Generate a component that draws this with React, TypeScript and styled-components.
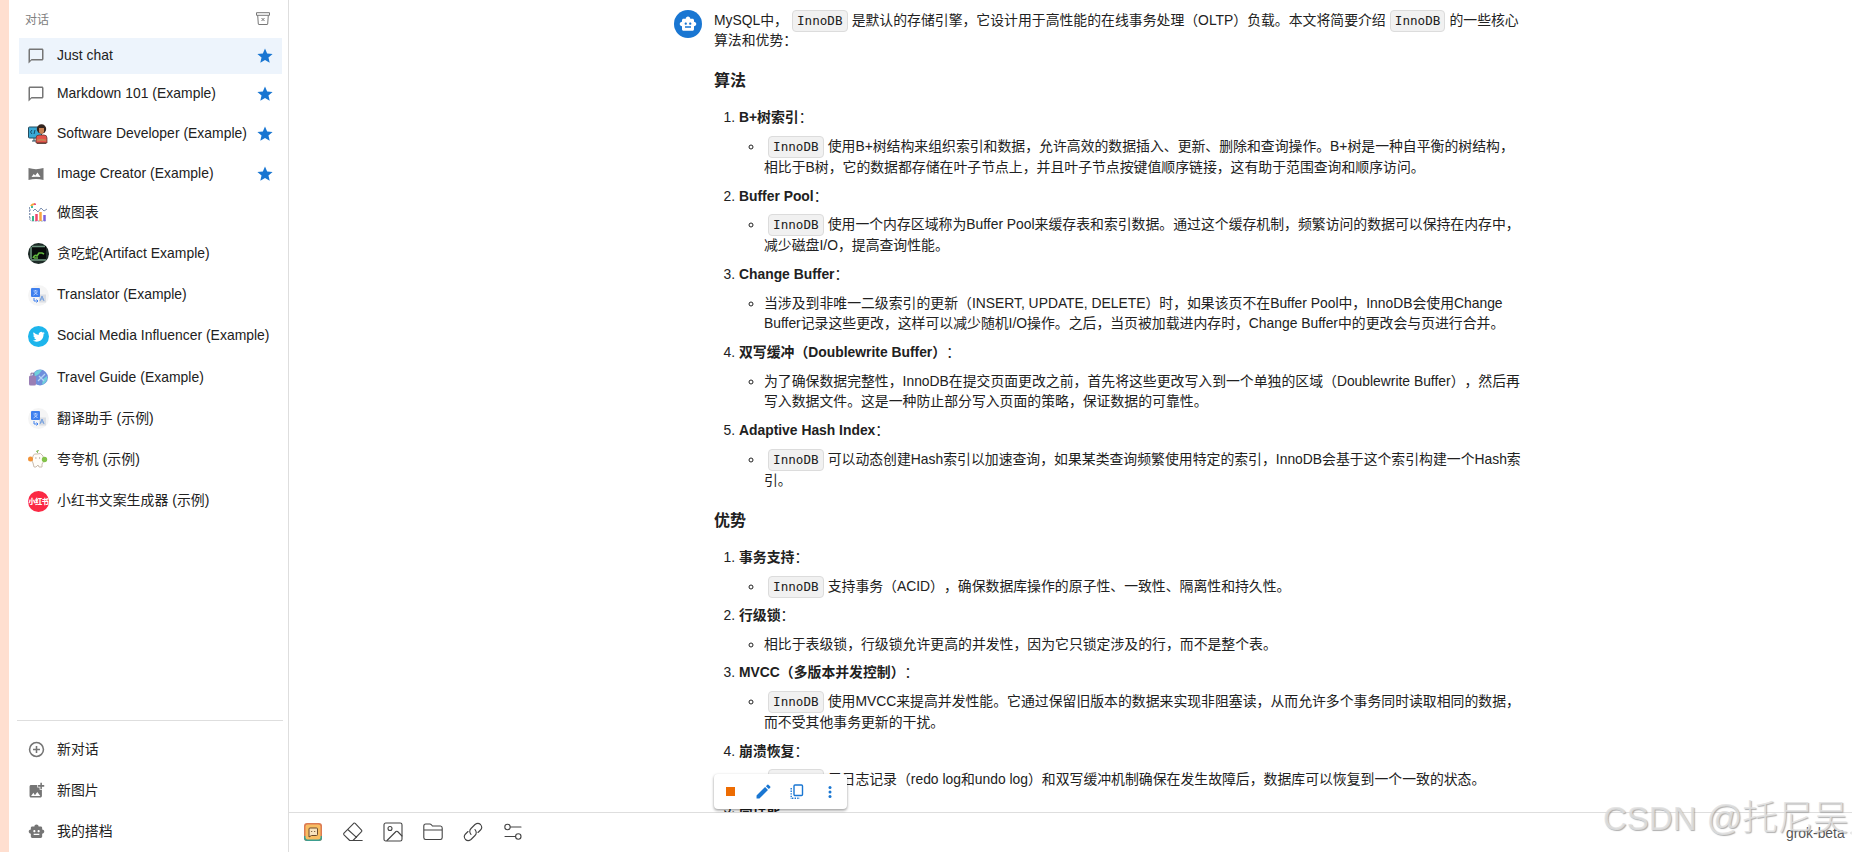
import React from "react";
import styled, { createGlobalStyle } from "styled-components";

const latin = '"Liberation Sans", "Noto Sans CJK SC", sans-serif';

const GlobalStyle = createGlobalStyle`
  * { box-sizing: border-box; }
  body { margin: 0; overflow: hidden; background: #fff; color: #212121; font-family: ${latin}; text-spacing-trim: space-all; }
`;

const Shell = styled.div`
  position: relative;
  display: flex;
  width: 1852px;
  height: 852px;
  overflow: hidden;
`;
const Strip = styled.div`
  width: 9px;
  background: #ffdfd0;
`;
const Sidebar = styled.aside`
  display: flex;
  flex-direction: column;
  width: 280px;
  padding: 0 5px 0 8px;
  border-right: 1px solid #dedede;
`;
const SideHead = styled.div`
  display: flex;
  justify-content: space-between;
  align-items: center;
  height: 38px;
  padding: 0 13px 1px 8px;
  font-size: 12px;
  color: #808080;
`;
const Session = styled.div<{ $h: number; $active?: boolean }>`
  display: flex;
  align-items: center;
  height: ${(p) => p.$h}px;
  margin: 0 1px 0 2px;
  padding: 0 9px 0 9px;
  background: ${(p) => (p.$active ? "#edf4fc" : "transparent")};
`;
const IconSlot = styled.span<{ $nudge?: boolean }>`
  display: flex;
  width: 29px;
  flex: none;
  color: #757575;
  svg { margin-left: ${(p) => (p.$nudge ? "-1px" : "0")}; }
`;
const Title = styled.span`
  flex: 1;
  font-size: 13.9px;
  letter-spacing: 0.03px;
  line-height: 20px;
  white-space: nowrap;
  margin-top: -2px;
`;
const SideFoot = styled.div`
  margin-top: auto;
  padding-top: 8px;
  border-top: 1px solid #dedede;
`;
const FootRow = styled.div`
  display: flex;
  align-items: center;
  height: 41px;
  padding-left: 11px;
`;
const Main = styled.main`
  display: flex;
  flex-direction: column;
  flex: 1;
  min-width: 0;
`;
const Chat = styled.section`
  display: flex;
  height: 812px;
  overflow: hidden;
  padding: 10px 0 0 385px;
`;
const Avatar = styled.div`
  display: flex;
  align-items: center;
  justify-content: center;
  flex: none;
  width: 28px;
  height: 28px;
  border-radius: 50%;
  background: #1976d2;
  margin-right: 12px;
`;
const Message = styled.article`
  width: 830px;
  font-size: 13.87px;
  line-height: 20.6px;
  white-space: nowrap;
`;
const Line = styled.div`
  height: 20.3px;
`;
const Heading = styled.h3`
  margin: 18.2px 0 14.6px;
  font-size: 16px;
  line-height: 24px;
  font-weight: 700;
`;
const Code = styled.code`
  display: inline-block;
  height: 22px;
  margin: -1px 4px;
  padding: 0 4.1px;
  border: 1px solid #dcdcdc;
  border-radius: 4px;
  background: #f1f1f1;
  font-family: "DejaVu Sans Mono", monospace;
  font-size: 12.6px;
  line-height: 20px;
`;
const Numbered = styled.ol`
  margin: 0;
  padding-left: 25px;
  & > li { margin-bottom: 8.1px; }
`;
const Bullets = styled.ul`
  list-style: circle;
  margin: 8.1px 0 0;
  padding-left: 25px;
`;
const InputBar = styled.footer`
  display: flex;
  align-items: flex-start;
  justify-content: space-between;
  height: 40px;
  padding: 9px 0 0 14px;
  border-top: 1px solid #dedede;
  color: #444;
`;
const Tools = styled.div`
  display: flex;
  gap: 20px;
`;
const Model = styled.div`
  display: flex;
  align-items: center;
  gap: 5px;
  width: 66px;
  height: 22px;
  overflow: hidden;
  font-size: 13.9px;
  white-space: nowrap;
  color: #555;
`;
const ActionMenu = styled.div`
  position: absolute;
  left: 714px;
  top: 774px;
  display: grid;
  grid-template-columns: repeat(4, 33px);
  place-items: center;
  width: 133px;
  height: 35px;
  border-radius: 4px;
  background: #fff;
  color: #1976d2;
  box-shadow: 0 1px 3px rgba(0, 0, 0, 0.28), 0 2px 3px rgba(0, 0, 0, 0.16);
`;
const StopMark = styled.span`
  width: 9px;
  height: 9px;
  background: #ed6c02;
`;
const Watermark = styled.div`
  position: absolute;
  left: 1603px;
  top: 796px;
  display: flex;
  align-items: baseline;
  gap: 10px;
  font-size: 33px;
  line-height: 44px;
  white-space: nowrap;
  color: rgba(225, 225, 225, 0.85);
  text-shadow: 1px 1px 1px rgba(130, 130, 130, 0.65);
`;
const Name = styled.span`
  font-size: 35.5px;
  font-weight: 300;
  letter-spacing: -0.2px;
`;

const Robot = ({ s, c }: { s: number; c: string }) => (
  <svg width={s} height={s} viewBox="0 0 24 24" fill={c}>
    <path d="M20 9V7c0-1.100-.9-2-2-2h-3c0-1.660-1.340-3-3-3S9 3.340 9 5H6c-1.100 0-2 .9-2 2v2c-1.660 0-3 1.340-3 3s1.340 3 3 3v4c0 1.100.9 2 2 2h12c1.100 0 2-.9 2-2v-4c1.660 0 3-1.340 3-3s-1.340-3-3-3M7.500 11.500c0-.83.67-1.500 1.500-1.500s1.500.67 1.500 1.500S9.830 13 9 13s-1.500-.67-1.500-1.500M16 17H8v-2h8zm-1-4c-.83 0-1.500-.67-1.500-1.500S14.170 10 15 10s1.500.67 1.500 1.500S15.830 13 15 13" />
  </svg>
);
const Bubble = () => (
  <svg width="18" height="18" viewBox="0 0 24 24" fill="currentColor">
    <path d="M20 2H4c-1.100 0-2 .9-2 2v18l4-4h14c1.100 0 2-.9 2-2V4c0-1.100-.9-2-2-2m0 14H6l-2 2V4h16z" />
  </svg>
);
const Star = () => (
  <svg width="16" height="16" viewBox="1.500 1.500 21 21" fill="#1976d2">
    <path d="M12 17.270 18.180 21l-1.640-7.030L22 9.240l-7.190-.61L12 2 9.190 8.630 2 9.240l5.460 4.730L5.820 21z" />
  </svg>
);
const Archive = () => (
  <svg width="14" height="13" viewBox="0 0 14 13" fill="none" stroke="#777">
    <path d="M.5.700h13v2.600H.5zM1.700 3.300 2.300 12q0 .5.600.5h8.200q.6 0 .6-.5l.6-8.700" />
    <path d="m5.500 6 3 3m0-3-3 3" />
  </svg>
);
const Panorama = () => (
  <svg width="18" height="18" viewBox="0 0 24 24" fill="#757575">
    <path fillRule="evenodd" d="M2 4q10 3 20 0v16q-10-3-20 0zM6 16q6-1 12 0l-4-6-3 4-2-2z" />
  </svg>
);
const Developer = () => (
  <svg width="20" height="20" viewBox="0 0 20 20">
    <rect x=".5" y="3" width="13" height="11" rx="1" fill="#39a9d6" stroke="#254b5d" />
    <path d="M4 17h5M6 14v3" stroke="#254b5d" />
    <path d="m4 6-1.500 2L4 10m3-4-1 4" stroke="#154a64" fill="none" />
    <circle cx="13.500" cy="5" r="4.700" fill="#34251f" />
    <path d="M11 4h5v4q-2.500 4-5 0z" fill="#c98253" />
    <path d="M8 19v-5q0-3 3-3h5q3 0 3 3v5z" fill="#e4534a" stroke="#55302d" strokeWidth=".7" />
    <path d="M9 16.500q4-1.500 9 0" stroke="#c98253" strokeWidth="1.800" fill="none" />
    <path d="M9 19.300h9" stroke="#4b3029" />
  </svg>
);
const Chart = () => (
  <svg width="20" height="20" viewBox="0 0 20 20" fill="none">
    <path d="M1.500 4v11q0 3 3 3h13M1 7h2m-2 4h2m-2 4h2" stroke="#8b9bb8" strokeDasharray="2 1" />
    <path d="m5 8 2-2 3 3 3-4 3 3 3-2" stroke="#7b8fb0" />
    <path d="M3 3q1-2 4-2" stroke="#f3a33a" strokeWidth="2" />
    <path d="M3 4h2" stroke="#43bd9b" strokeWidth="2" />
    <path d="M6 1.200h2" stroke="#e94a83" strokeWidth="1.600" />
    <path d="M5 13v5" stroke="#36b58d" strokeWidth="2" />
    <path d="M8.500 11v7" stroke="#ef4770" strokeWidth="2.500" />
    <path d="M12.500 9v9" stroke="#f6a340" strokeWidth="2.500" />
    <path d="M16.500 12v6" stroke="#7b62dd" strokeWidth="2.500" />
  </svg>
);
const Snake = () => (
  <svg width="21" height="21" viewBox="0 0 21 21">
    <circle cx="10.500" cy="10.500" r="10.500" fill="#1d2b27" />
    <path d="M4 3h14v13H4z" fill="#070b0b" />
    <path d="M3 4v12m0 1h15M4 3.500h13" stroke="#6d957e" strokeWidth="1.500" />
    <path d="M5 15q2-4 4-2l2-3h3l2 1" stroke="#61b53e" fill="none" strokeWidth="1.600" />
    <path d="M6 15h4" stroke="#61b53e" strokeWidth="1.500" />
  </svg>
);
const Translate = () => (
  <svg width="21" height="21" viewBox="0 0 21 21" fill="none">
    <circle cx="10.500" cy="10.500" r="10.500" fill="#f5f5f5" />
    <rect x="11" y="9.500" width="7" height="8" fill="#dadde3" />
    <rect x="3" y="3" width="9" height="9" rx="1" fill="#3f80ee" />
    <path d="M5.500 6h4m-2-1v1m-2 4 4-3m-3 0 3 3" stroke="#b9d3ff" />
    <path d="M6 13v3h4m-1.500-1.500L10 16l-1.500 1.500" stroke="#3f80ee" />
    <path d="m12 16 2-5 2 5m-3.500-2h3" stroke="#74a0df" />
  </svg>
);
const Bird = () => (
  <svg width="21" height="21" viewBox="0 0 42 42">
    <circle cx="21" cy="21" r="21" fill="#1db5ec" />
    <g transform="translate(9.500 9.500)" fill="#fff">
      <path d="M23.950 4.570a10 10 0 0 1-2.820.77 4.960 4.960 0 0 0 2.160-2.720 9.900 9.900 0 0 1-3.120 1.190 4.920 4.920 0 0 0-8.380 4.480A14 14 0 0 1 1.640 3.160a4.920 4.920 0 0 0 1.520 6.570 4.900 4.900 0 0 1-2.230-.61v.06a4.920 4.920 0 0 0 3.950 4.830 5 5 0 0 1-2.210.08 4.940 4.940 0 0 0 4.600 3.420A9.870 9.870 0 0 1 0 19.540a14 14 0 0 0 7.550 2.210c9.050 0 14-7.500 14-13.980q0-.32-.02-.64a10 10 0 0 0 2.420-2.560" />
    </g>
  </svg>
);
const Travel = () => (
  <svg width="20" height="18" viewBox="0 0 20 18" fill="none">
    <circle cx="12" cy="8.500" r="7.900" fill="#6f8fdc" />
    <path d="M6 4q4-4 8-3l-3 4-5 3zM15 10l4-3q1 6-5 9z" fill="#6fd0dc" />
    <path d="m10 12 7-7m-6 2 5 5" stroke="#b5d5f5" strokeWidth="1.300" />
    <rect x="1" y="6.500" width="7" height="10" rx="1.500" fill="#9a7fb5" />
    <path d="M3 6.500V4.200h3v2.300" stroke="#806c9b" />
  </svg>
);
const Praise = () => (
  <svg width="20" height="20" viewBox="0 0 20 20" fill="none">
    <path d="M5 6q1-3 4-2 4-2 6 2l1 5-2 3v3h-3l-1-2-2 2H6l-1-4-1-2z" fill="#fffdf8" stroke="#c9bcae" />
    <circle cx="2.500" cy="9" r="2.500" fill="#f29236" />
    <circle cx="16.500" cy="9.500" r="2.700" fill="#83c24a" />
    <path d="M9.500 3V.5M8 1.500l3-1" stroke="#8cbf68" />
    <path d="M7.500 8h.8m3 0h.8" stroke="#695b50" />
  </svg>
);
const RedSeal = styled.span`
  display: flex;
  align-items: center;
  justify-content: center;
  width: 21px;
  height: 21px;
  border-radius: 50%;
  overflow: hidden;
  background: #fb2944;
  color: #fff;
  font-size: 7px;
  font-weight: 900;
  letter-spacing: -0.3px;
  white-space: nowrap;
`;

const sessions: { t: string; h: number; icon: React.ReactNode; star?: boolean; nudge?: boolean }[] = [
  { t: "Just chat", h: 36, icon: <Bubble />, star: true, nudge: true },
  { t: "Markdown 101 (Example)", h: 39, icon: <Bubble />, star: true, nudge: true },
  { t: "Software Developer (Example)", h: 41, icon: <Developer />, star: true },
  { t: "Image Creator (Example)", h: 39, icon: <Panorama />, star: true, nudge: true },
  { t: "做图表", h: 39, icon: <Chart /> },
  { t: "贪吃蛇(Artifact Example)", h: 43, icon: <Snake /> },
  { t: "Translator (Example)", h: 40, icon: <Translate /> },
  { t: "Social Media Influencer (Example)", h: 42, icon: <Bird /> },
  { t: "Travel Guide (Example)", h: 41, icon: <Travel /> },
  { t: "翻译助手 (示例)", h: 41, icon: <Translate /> },
  { t: "夸夸机 (示例)", h: 42, icon: <Praise /> },
  { t: "小红书文案生成器 (示例)", h: 40, icon: <RedSeal>小红书</RedSeal> },
];

type Point = { t: string; code?: boolean; lines: string[] };
const algorithms: Point[] = [
  { t: "B+树索引", code: true, lines: ["使用B+树结构来组织索引和数据，允许高效的数据插入、更新、删除和查询操作。B+树是一种自平衡的树结构，", "相比于B树，它的数据都存储在叶子节点上，并且叶子节点按键值顺序链接，这有助于范围查询和顺序访问。"] },
  { t: "Buffer Pool", code: true, lines: ["使用一个内存区域称为Buffer Pool来缓存表和索引数据。通过这个缓存机制，频繁访问的数据可以保持在内存中，", "减少磁盘I/O，提高查询性能。"] },
  { t: "Change Buffer", lines: ["当涉及到非唯一二级索引的更新（INSERT, UPDATE, DELETE）时，如果该页不在Buffer Pool中，InnoDB会使用Change", "Buffer记录这些更改，这样可以减少随机I/O操作。之后，当页被加载进内存时，Change Buffer中的更改会与页进行合并。"] },
  { t: "双写缓冲（Doublewrite Buffer）", lines: ["为了确保数据完整性，InnoDB在提交页面更改之前，首先将这些更改写入到一个单独的区域（Doublewrite Buffer），然后再", "写入数据文件。这是一种防止部分写入页面的策略，保证数据的可靠性。"] },
  { t: "Adaptive Hash Index", code: true, lines: ["可以动态创建Hash索引以加速查询，如果某类查询频繁使用特定的索引，InnoDB会基于这个索引构建一个Hash索", "引。"] },
];
const benefits: Point[] = [
  { t: "事务支持", code: true, lines: ["支持事务（ACID），确保数据库操作的原子性、一致性、隔离性和持久性。"] },
  { t: "行级锁", lines: ["相比于表级锁，行级锁允许更高的并发性，因为它只锁定涉及的行，而不是整个表。"] },
  { t: "MVCC（多版本并发控制）", code: true, lines: ["使用MVCC来提高并发性能。它通过保留旧版本的数据来实现非阻塞读，从而允许多个事务同时读取相同的数据，", "而不受其他事务更新的干扰。"] },
  { t: "崩溃恢复", code: true, lines: ["用日志记录（redo log和undo log）和双写缓冲机制确保在发生故障后，数据库可以恢复到一个一致的状态。"] },
  { t: "高性能", lines: [] },
];

const Points = ({ items }: { items: Point[] }) => (
  <Numbered>
    {items.map((p) => (
      <li key={p.t}>
        <strong>{p.t}</strong>：
        {p.lines.length > 0 && (
          <Bullets>
            <li>
              {p.code && <Code>InnoDB</Code>}
              {p.lines[0]}
              {p.lines[1] && <br />}
              {p.lines[1]}
            </li>
          </Bullets>
        )}
      </li>
    ))}
  </Numbered>
);

const Tool = ({ children }: { children: React.ReactNode }) => (
  <svg width="20" height="20" viewBox="0 0 20 20" fill="none" stroke="currentColor" strokeWidth="1.100" strokeLinecap="round" strokeLinejoin="round">
    {children}
  </svg>
);

export default function App() {
  return (
    <Shell>
      <GlobalStyle />
      <Strip />
      <Sidebar>
        <SideHead>
          <span>对话</span>
          <Archive />
        </SideHead>
        {sessions.map((s, i) => (
          <Session key={s.t} $h={s.h} $active={i === 0}>
            <IconSlot $nudge={s.nudge}>{s.icon}</IconSlot>
            <Title>{s.t}</Title>
            {s.star && <Star />}
          </Session>
        ))}
        <SideFoot>
          <FootRow>
            <IconSlot>
              <svg width="17" height="17" viewBox="1 1 22 22" fill="none" stroke="currentColor" strokeWidth="2">
                <circle cx="12" cy="12" r="9" />
                <path d="M7.500 12h9M12 7.500v9" />
              </svg>
            </IconSlot>
            <Title>新对话</Title>
          </FootRow>
          <FootRow>
            <IconSlot>
              <svg width="17" height="17" viewBox="1 1 22 22" fill="currentColor">
                <path d="M19 7v2.990s-1.990.01-2 0V7h-3s.01-1.990 0-2h3V2h2v3h3v2zm-3 4V8h-3V5H5c-1.100 0-2 .9-2 2v12c0 1.100.9 2 2 2h12c1.100 0 2-.9 2-2v-8zM5 19l3-4 2 3 3-4 4 5z" />
              </svg>
            </IconSlot>
            <Title>新图片</Title>
          </FootRow>
          <FootRow>
            <IconSlot>
              <Robot s={17} c="#757575" />
            </IconSlot>
            <Title>我的搭档</Title>
          </FootRow>
        </SideFoot>
      </Sidebar>
      <Main>
        <Chat>
          <Avatar>
            <Robot s={18} c="#fff" />
          </Avatar>
          <Message>
            <Line>
              MySQL中，<Code>InnoDB</Code>是默认的存储引擎，它设计用于高性能的在线事务处理（OLTP）负载。本文将简要介绍<Code>InnoDB</Code>的一些核心
            </Line>
            <Line>算法和优势：</Line>
            <Heading>算法</Heading>
            <Points items={algorithms} />
            <Heading>优势</Heading>
            <Points items={benefits} />
          </Message>
        </Chat>
        <InputBar>
          <Tools>
            <svg width="20" height="20" viewBox="0 0 20 20" fill="none">
              <rect x="1" y="1" width="18" height="18" rx="3" fill="#dc7a52" />
              <path d="M1 14v2q0 3 3 3h12q3 0 3-3v-2z" fill="#3c9e90" />
              <rect x="2.500" y="2.500" width="15" height="15" rx="2" fill="#f8bd63" />
              <path d="M7 6h6.500q1 0 1 1v5.500q0 1-1 1H8.500L6 15V7q0-1 1-1z" fill="#f8e2bd" stroke="#6b4a2c" />
              <path d="M8.700 9v1m3-1v1" stroke="#6b4a2c" />
            </svg>
            <Tool><path d="M10.700 1.300q.8-.6 1.500 0l6.300 6.900q.6.800 0 1.500l-8.500 8.800H6.700L1 12.800q-.6-.8 0-1.600zM4.800 7.500l8.700 7.800M6.700 18.500h12.500" /></Tool>
            <Tool><rect x="1" y="1" width="18" height="18" rx="1.800" /><circle cx="7" cy="6.500" r="2" /><path d="m4 18.500 9-9q.8-.6 1.600 0l4.400 4.500" /></Tool>
            <Tool><path d="M.8 8h18.400M.8 4q0-2 2-2h4q1 0 1.800 1l.8 1h8q1.800 0 1.800 2v9.500q0 2-1.800 2H2.600q-1.800 0-1.800-2z" /></Tool>
            <Tool><path d="M8 12.500Q5.500 9 8 6.500l4-4q3-2.300 5.500 0 2.500 3 0 5.500L15 10.500M12 7.500q2.500 3.500 0 6l-4 4q-3 2.300-5.500 0-2.500-3 0-5.500L5 9.500" /></Tool>
            <Tool><circle cx="4.500" cy="5" r="2.700" /><path d="M7.500 5H18M2 14.500h10.500" /><circle cx="15.300" cy="14.500" r="2.700" /></Tool>
          </Tools>
          <Model>
            <span>grok-beta</span>
            <svg width="10" height="10" viewBox="0 0 10 10" fill="none" stroke="#777"><path d="m1 3 4-2 4 2M1 7l4 2 4-2" /></svg>
          </Model>
        </InputBar>
      </Main>
      <ActionMenu>
        <StopMark />
        <svg width="17" height="17" viewBox="1 1 22 22" fill="currentColor">
          <path d="M3 17.250V21h3.750L17.810 9.940l-3.750-3.750zM20.710 7.040c.39-.39.39-1.020 0-1.410l-2.340-2.340a1 1 0 0 0-1.410 0l-1.830 1.830 3.750 3.750z" />
        </svg>
        <svg width="14" height="16" viewBox="0 0 14 16" fill="none" stroke="currentColor" strokeWidth="1.400">
          <rect x="4" y="1" width="8.500" height="10.500" rx="1" />
          <path d="M1.200 4v11M2 14.300h8" strokeDasharray="1.400 1.200" />
        </svg>
        <svg width="4" height="14" viewBox="0 0 4 14" fill="currentColor">
          <circle cx="2" cy="2.500" r="1.500" />
          <circle cx="2" cy="7" r="1.500" />
          <circle cx="2" cy="11.500" r="1.500" />
        </svg>
      </ActionMenu>
      <Watermark>
        <span>CSDN</span>
        <Name>@托尼吴</Name>
      </Watermark>
    </Shell>
  );
}
